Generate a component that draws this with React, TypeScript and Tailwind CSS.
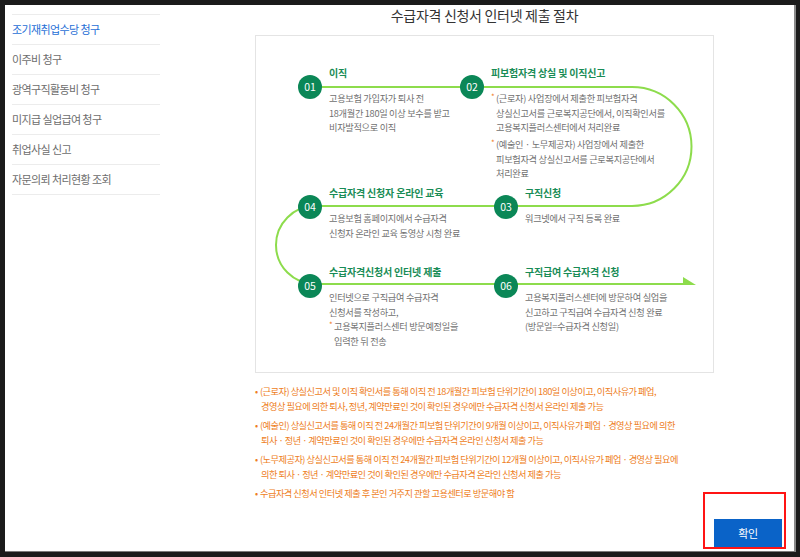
import React from "react";

const menu = [
  "조기재취업수당 청구",
  "이주비 청구",
  "광역구직활동비 청구",
  "미지급 실업급여 청구",
  "취업사실 신고",
  "자문의뢰 처리현황 조회",
];

const notes: [string, string | null][] = [
  [
    "(근로자) 상실신고서 및 이직 확인서를 통해 이직 전 18개월간 피보험 단위기간이 180일 이상이고, 이직사유가 폐업,",
    "경영상 필요에 의한 퇴사, 정년, 계약만료인 것이 확인된 경우에만 수급자격 신청서 온라인 제출 가능",
  ],
  [
    "(예술인) 상실신고서를 통해 이직 전 24개월간 피보험 단위기간이 9개월 이상이고, 이직사유가 폐업 · 경영상 필요에 의한",
    "퇴사 · 정년 · 계약만료인 것이 확인된 경우에만 수급자격 온라인 신청서 제출 가능",
  ],
  [
    "(노무제공자) 상실신고서를 통해 이직 전 24개월간 피보험 단위기간이 12개월 이상이고, 이직사유가 폐업 · 경영상 필요에",
    "의한 퇴사 · 정년 · 계약만료인 것이 확인된 경우에만 수급자격 온라인 신청서 제출 가능",
  ],
  ["수급자격 신청서 인터넷 제출 후 본인 거주지 관할 고용센터로 방문해야 함", null],
];

function Circle({ n }: { n: string }) {
  return (
    <div className="mt-[9px] flex h-6 w-6 shrink-0 items-center justify-center rounded-full bg-[#0b8757] text-[10.5px] leading-none text-white">
      {n}
    </div>
  );
}

function Lines({ lines }: { lines: string[] }) {
  return (
    <>
      {lines.map((l) => (
        <div key={l} className="whitespace-nowrap">
          {l}
        </div>
      ))}
    </>
  );
}

function Bullet({ lines, className = "" }: { lines: string[]; className?: string }) {
  return (
    <div className={"relative pl-[5px] " + className}>
      <span className="absolute left-0 top-[-1px] text-[8px] text-[#f07a26]">*</span>
      <Lines lines={lines} />
    </div>
  );
}

function Step({
  n,
  title,
  children,
  className = "",
}: {
  n: string;
  title: string;
  children: React.ReactNode;
  className?: string;
}) {
  return (
    <div className={"flex items-start " + className}>
      <Circle n={n} />
      <div className="ml-[7px]">
        <div className="whitespace-nowrap text-[10px] font-bold leading-[14px] tracking-[-0.2px] text-[#198c56]">
          {title}
        </div>
        <div className="mt-[11px] text-[9.2px] leading-[14.5px] tracking-[-0.3px] text-[#707070]">
          {children}
        </div>
      </div>
    </div>
  );
}

export default function App() {
  return (
    <div className="h-[557px] w-[800px] overflow-hidden bg-[#1b1b1b] pl-[5px] pt-[5px] font-['Noto_Sans_CJK_KR',sans-serif]">
      <div className="flex h-[547px] w-[791px] overflow-hidden border-b border-r-2 border-b-[#7a7a7a] border-r-[#8a8a8a] bg-white">
        {/* Sidebar */}
        <div className="w-[170px] shrink-0 pl-[7px] pt-[9px]">
          <ul className="w-[148px] border-t border-[#ececec]">
            {menu.map((m, i) => (
              <li
                key={m}
                className={
                  "flex h-[30px] items-center whitespace-nowrap border-b border-[#ececec] text-[11px] tracking-[-0.6px] " +
                  (i === 0 ? "text-[#1f6fd6]" : "text-[#6d6d6d]")
                }
              >
                {m}
              </li>
            ))}
          </ul>
        </div>

        {/* Main */}
        <div className="flex w-[619px] flex-col">
          <h1 className="whitespace-nowrap text-center text-[14px] font-normal leading-[20px] tracking-[-0.3px] text-[#333]">
            수급자격 신청서 인터넷 제출 절차
          </h1>

          <div className="relative mx-auto mt-[10px] h-[338px] w-[459px] border border-[#e4e4e4]">
            <svg className="absolute inset-0" width="457" height="336" viewBox="0 0 457 336">
              <path
                d="M 54 51 H 376 A 59.5 59.5 0 0 1 376 170 H 59 A 39 39 0 0 0 59 248 H 430"
                fill="none"
                stroke="#8ddc4c"
                strokeWidth="2"
              />
              <polygon points="427,241 440,249 427,249" fill="#8ddc4c" />
            </svg>

            <div className="relative pl-[42px] pt-[30px]">
              {/* Row 1 */}
              <div className="flex h-[120px]">
                <Step n="01" title="이직" className="w-[162px]">
                  <Lines lines={["고용보험 가입자가 퇴사 전", "18개월간 180일 이상 보수를 받고", "비자발적으로 이직"]} />
                </Step>
                <Step n="02" title="피보험자격 상실 및 이직신고">
                  <Bullet
                    lines={[
                      "(근로자) 사업장에서 제출한 피보험자격",
                      "상실신고서를 근로복지공단에서, 이직확인서를",
                      "고용복지플러스센터에서 처리완료",
                    ]}
                  />
                  <Bullet
                    className="mt-[2.5px]"
                    lines={["(예술인 · 노무제공자) 사업장에서 제출한", "피보험자격 상실신고서를 근로복지공단에서", "처리완료"]}
                  />
                </Step>
              </div>

              {/* Row 2 */}
              <div className="flex h-[79px]">
                <Step n="04" title="수급자격 신청자 온라인 교육" className="w-[196px]">
                  <Lines lines={["고용보험 홈페이지에서 수급자격", "신청자 온라인 교육 동영상 시청 완료"]} />
                </Step>
                <Step n="03" title="구직신청">
                  <Lines lines={["워크넷에서 구직 등록 완료"]} />
                </Step>
              </div>

              {/* Row 3 */}
              <div className="flex">
                <Step n="05" title="수급자격신청서 인터넷 제출" className="w-[196px]">
                  <Lines lines={["인터넷으로 구직급여 수급자격", "신청서를 작성하고,"]} />
                  <Bullet lines={["고용복지플러스센터 방문예정일을", "입력한 뒤 전송"]} />
                </Step>
                <Step n="06" title="구직급여 수급자격 신청">
                  <Lines
                    lines={[
                      "고용복지플러스센터에 방문하여 실업을",
                      "신고하고 구직급여 수급자격 신청 완료",
                      "(방문일=수급자격 신청일)",
                    ]}
                  />
                </Step>
              </div>
            </div>
          </div>

          {/* Notes */}
          <ul className="mx-auto mt-[11px] w-[459px] text-[9.2px] leading-[15px] tracking-[-0.5px] text-[#ee7d22]">
            {notes.map(([a, b]) => (
              <li key={a} className="mb-[4px] whitespace-nowrap">
                <div className="flex">
                  <span className="w-[5px] shrink-0">•</span>
                  <span>{a}</span>
                </div>
                {b && <div className="pl-[6px]">{b}</div>}
              </li>
            ))}
          </ul>

          {/* Button */}
          <div className="mt-[14px] flex justify-end pr-[12px]">
            <div className="relative">
              <button className="h-[28px] w-[68px] bg-[#0a63c8] text-[11px] tracking-[-0.3px] text-white">
                확인
              </button>
              <div className="pointer-events-none absolute bottom-[-2px] left-[-11px] right-[-4px] top-[-27px] border-2 border-[#ff1414]" />
            </div>
          </div>
        </div>
      </div>
    </div>
  );
}
